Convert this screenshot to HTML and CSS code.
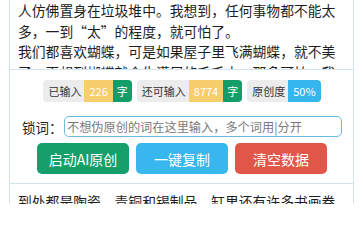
FILE: index.html
```html
<!DOCTYPE html>
<html lang="zh-CN">
<head>
<meta charset="utf-8">
<title>AI伪原创</title>
<link rel="stylesheet" href="styles.css">
</head>
<body>
<div class="wrap">
  <div class="editor editor-top">
    <p>人仿佛置身在垃圾堆中。我想到，任何事物都不能太多，一到“太”的程度，就可怕了。</p>
    <p>我们都喜欢蝴蝶，可是如果屋子里飞满蝴蝶，就不美了。再想到蝴蝶就会生满屋的毛毛虫，那多可怕。我</p>
  </div>
  <div class="panel">
    <div class="stats">
      <div class="badge"><span class="seg label">已输入</span><span class="seg num">226</span><span class="seg unit">字</span></div>
      <div class="badge"><span class="seg label">还可输入</span><span class="seg num">8774</span><span class="seg unit">字</span></div>
      <div class="badge"><span class="seg label">原创度</span><span class="seg pct">50%</span></div>
    </div>
    <div class="lock">
      <span class="lock-label">锁词：</span>
      <input class="lock-input" type="text" placeholder="不想伪原创的词在这里输入，多个词用|分开">
    </div>
    <div class="actions">
      <button class="btn btn-green">启动AI原创</button>
      <button class="btn btn-blue">一键复制</button>
      <button class="btn btn-red">清空数据</button>
    </div>
  </div>
  <div class="editor editor-bottom">
    <p>到处都是陶瓷、青铜和锡制品。缸里还有许多书画卷轴，桌上堆满了各种古玩。</p>
  </div>
</div>
</body>
</html>
```

FILE: styles.css
```css
* { box-sizing: border-box; }
html, body {
  margin: 0;
  padding: 0;
  background: #ffffff;
  overflow: hidden;
}
body {
  width: 363px;
  height: 204px;
  font-family: "Noto Sans CJK SC", "Noto Sans", sans-serif;
  color: #1e1e1e;
}
.wrap {
  margin: 0 9px;
}
.editor {
  border: 1px solid #d3e4ee;
  padding: 0 8px;
  font-size: 13.8px;
  line-height: 20.5px;
  overflow: hidden;
}
.editor p { margin: 0; }
.editor-top {
  border-top: none;
  height: 70px;
}
.editor-bottom {
  padding-top: 7px;
  height: 60px;
}
.panel {
  border-left: 1px solid #d3e4ee;
  border-right: 1px solid #d3e4ee;
  padding: 10px 11px 9px 12px;
}
.stats {
  display: flex;
  justify-content: center;
  gap: 5px;
}
.badge {
  display: flex;
  height: 22px;
  border-radius: 4px;
  overflow: hidden;
  font-size: 11px;
  line-height: 22px;
}
.seg { display: block; }
.label {
  background: #ececec;
  color: #333;
  padding: 0 3px 0 5px;
}
.num {
  background: #f8cd6c;
  color: #fff;
  padding: 0 5px;
}
.unit {
  background: #149c69;
  color: #fff;
  padding: 0 4px;
}
.pct {
  background: #35b6ec;
  color: #fff;
  padding: 0 5px;
}
.lock {
  display: flex;
  align-items: center;
  margin-top: 14px;
  height: 21px;
}
.lock-label {
  font-size: 13.5px;
  color: #222;
  width: 42px;
  flex: none;
}
.lock-input {
  flex: 1;
  height: 21px;
  border: 1px solid #69b9e0;
  border-radius: 5px;
  padding: 0 2px;
  font-family: "Noto Sans CJK SC", sans-serif;
  font-size: 12.2px;
  color: #333;
  outline: none;
  background: #fff;
}
.lock-input::placeholder { color: #7a7a7a; }
.actions {
  display: flex;
  justify-content: center;
  gap: 7px;
  margin-top: 6px;
}
.btn {
  width: 92px;
  height: 31px;
  border: none;
  border-radius: 5px;
  color: #fff;
  font-family: "Noto Sans CJK SC", sans-serif;
  font-size: 14px;
  padding: 0;
}
.btn-green { background: #15a06b; }
.btn-blue { background: #38b7ee; }
.btn-red { background: #e0574a; }
```
